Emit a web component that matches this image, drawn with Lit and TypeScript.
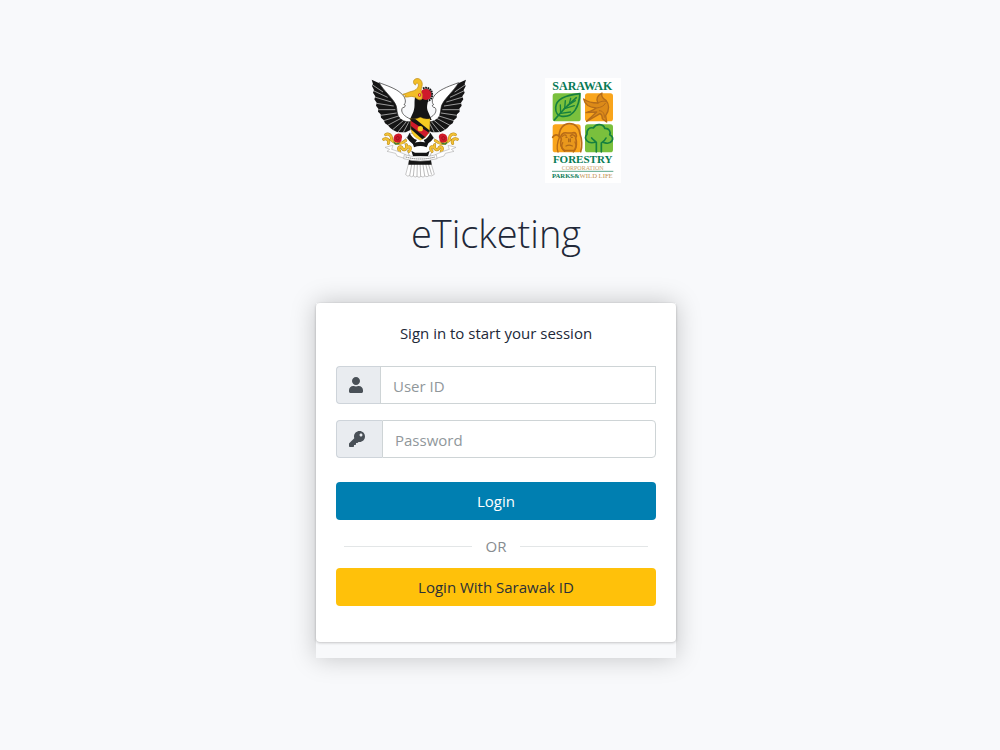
import { LitElement, html, svg, css } from "lit";
import { customElement } from "lit/decorators.js";

// One wing, drawn for the left side and mirrored for the right.
const wing = svg`
  <path fill="#151515" d="M20 29 L48 42 C70 55 92 62 104 74 L112 140 L140 152 L136 180 L122 187 L108 187 L96 186 L84 180 L76 174 L68 165 L60 160 L56 150 L48 143 L47 133 L39 125 L40 116 L33 107 L35 98 L28 88 L31 79 L24 68 L27 60 L21 48 L24 42 Z"/>
  <path fill="#fff" stroke="#222" stroke-width="2" d="M42 38 C64 46 94 56 108 70 C121 80 125 97 117 104 C123 103 122 113 113 113 C108 118 110 129 118 136 C126 143 134 146 142 149 L136 155 C118 157 104 148 99 136 C94 122 97 110 90 100 C82 84 58 64 42 38 Z"/>
  <g fill="none" stroke="#ddd" stroke-width="2">
    <path d="M23 45 L54 66"/><path d="M25 62 L68 82"/><path d="M29 81 L79 96"/>
    <path d="M34 100 L86 108"/><path d="M40 119 L91 119"/><path d="M47 136 L95 129"/>
    <path d="M56 152 L101 138"/><path d="M68 166 L108 145"/><path d="M83 179 L116 151"/>
    <path d="M99 186 L124 155"/><path d="M115 187 L131 157"/>
  </g>`;

const scroll = svg`
  <g fill="none" stroke="#b98a18" stroke-width="9" stroke-linecap="round">
    <path d="M62 194 C70 188 78 196 80 204 M56 208 C66 202 74 212 70 220 M78 208 C92 224 104 226 122 212 M104 244 C96 232 108 224 112 236 C118 244 128 236 124 224 M128 232 C138 226 138 240 132 244"/>
  </g>
  <g fill="none" stroke="#f2c136" stroke-width="6" stroke-linecap="round">
    <path d="M62 194 C70 188 78 196 80 204 M56 208 C66 202 74 212 70 220 M78 208 C92 224 104 226 122 212 M104 244 C96 232 108 224 112 236 C118 244 128 236 124 224 M128 232 C138 226 138 240 132 244"/>
  </g>
  <path fill="#3f7a34" d="M84 214 l10 6 12-3 -4 6 -12 1z"/>
  <path fill="#cf1a2b" d="M98 191 C109 189 114 199 110 206 C111 215 102 220 95 217 C86 216 84 206 87 200 C89 193 94 191 98 191 Z"/>
  <path fill="none" stroke="#8e0b18" stroke-width="2" d="M94 202 C98 196 106 202 101 208 C96 212 91 207 94 202"/>
  <path fill="#fff" stroke="#b4b4b4" stroke-width="2" d="M60 232 L84 226 L80 238 L104 246 L122 254 L122 266 L96 258 L92 250 L66 244 L74 238 Z"/>`;

const crest = svg`
  <svg class="crest" viewBox="18 24 288 300" role="img" aria-label="Sarawak coat of arms">
    <path fill="#fff" stroke="#aaa" stroke-width="2" d="M133 272 L122 314 Q128 321 134 317 Q139 323 145 318 Q150 324 156 319 Q162 325 168 319 Q174 324 180 318 Q186 323 192 317 Q200 320 208 313 L196 272 Z"/>
    <path fill="none" stroke="#999" stroke-width="2" d="M141 278 L134 317 M149 278 L145 318 M157 278 L156 319 M165 278 L167 319 M173 278 L179 318 M181 278 L191 317 M189 278 L200 314"/>
    ${wing}
    <g transform="matrix(-1 0 0 1 323 0)">${wing}</g>
    <path fill="#fff" stroke="#999" stroke-width="2" d="M136 190 L196 190 L214 214 L190 270 L138 270 L116 212 Z"/>
    <path fill="#151515" d="M134 188 Q140 204 156 210 L146 224 L134 214 L126 204 Z M196 188 Q190 204 176 210 L184 224 L198 214 L206 204 Z"/>
    <path fill="#151515" d="M143 220 Q166 210 190 220 L185 232 Q166 224 147 232 Z M139 242 L150 248 L184 248 L194 242 L189 258 L144 258 Z M132 270 L198 270 L200 284 L130 284 Z"/>
    ${scroll}
    <g transform="matrix(-1 0 0 1 333 0)">${scroll}</g>
    <path fill="#fff" stroke="#aaa" stroke-width="2" d="M118 254 Q166 268 214 254 L216 266 Q166 280 116 266 Z"/>
    <path fill="none" stroke="#777" stroke-width="3" stroke-dasharray="4 2" d="M122 261 Q166 273 210 261"/>
    <path fill="#151515" d="M151 78 C146 96 152 108 145 126 L134 150 L200 150 L188 122 C183 108 190 98 190 84 Z"/>
    <circle cx="183" cy="73" r="17" fill="#cf1a2b"/>
    <path fill="none" stroke="#151515" stroke-width="6" stroke-dasharray="5 2" d="M174 56 C184 49 200 57 201 70 C203 82 197 92 186 93"/>
    <path fill="#f2bd27" stroke="#b98a18" stroke-width="2" d="M113 73 C124 71 130 66 140 64 C150 62 158 57 160 48 C162 38 152 37 152 45 C145 43 142 32 151 27 C164 21 175 35 171 48 C168 58 167 66 172 73 L171 87 C162 94 155 84 148 81 C137 76 132 83 119 81 L122 76 Z"/>
    <circle cx="164" cy="75" r="5" fill="#cf1a2b"/><circle cx="164" cy="75" r="2" fill="#fff"/>
    <path fill="#f6cb22" d="M137 146 Q151 150 166 142 Q180 150 195 146 L194 180 Q190 200 166 211 Q142 200 138 180 Z"/>
    <path fill="#151515" d="M137 146 L151 147 L195 182 L192 190 L137 156 Z"/>
    <path fill="#cf1a2b" d="M137 152 L192 188 L180 203 L137 169 Z"/>
    <path fill="#151515" d="M137 167 L181 202 L172 208 L138 178 Z"/>
    <circle cx="166" cy="176" r="8" fill="#f6cb22"/>
    <path fill="none" stroke="#a87a10" stroke-width="1" d="M137 146 Q151 150 166 142 Q180 150 195 146 L194 180 Q190 200 166 211 Q142 200 138 180 Z"/>
  </svg>`;

const forestry = svg`
  <svg class="forestry" viewBox="31 24 228 315" role="img" aria-label="Sarawak Forestry Corporation">
    <rect x="31" y="24" width="228" height="315" fill="#fff"/>
    <text x="143" y="59" class="name" font-size="36" fill="#087a55">SARAWAK</text>
    <rect x="54" y="70" width="84" height="84" rx="8" fill="#7ac03d"/>
    <rect x="151" y="70" width="84" height="84" rx="8" fill="#f9a51c"/>
    <rect x="54" y="163" width="84" height="84" rx="8" fill="#f9a51c"/>
    <rect x="151" y="163" width="84" height="84" rx="8" fill="#7ac03d"/>
    <g fill="none" stroke="#16803f" stroke-width="5" stroke-linecap="round" stroke-linejoin="round">
      <path d="M136 71 C105 74 65 84 63 112 C62 128 70 138 82 139 C118 143 133 108 136 71 Z"/>
      <path d="M59 150 C72 134 95 108 125 83"/>
      <path d="M78 130 L108 126 M89 116 L119 107 M99 106 L122 92 M78 130 L77 105 M90 116 L92 92 M104 102 L108 85" stroke-width="4"/>
      <path d="M184 216 C158 224 146 206 157 193 C155 178 166 171 176 174 C185 158 207 163 210 175 C224 174 229 186 225 194 C242 204 232 225 209 218 L203 216 M184 216 C180 212 174 208 171 204 M185 217 L185 246 M200 246 L200 219 C204 217 210 213 214 204"/>
    </g>
    <g fill="#dc8a18" stroke="#b46c1a" stroke-width="4" stroke-linecap="round" stroke-linejoin="round">
      <path d="M147 87 C160 97 176 99 190 99 C182 88 189 76 202 69 C198 80 205 86 214 91 C224 102 225 120 213 137 L216 156 L203 146 C203 138 202 134 196 131 L156 154 L186 126 L154 128 C168 124 178 120 184 114 C166 112 150 104 147 87 Z"/>
      <path fill="none" stroke-width="3" d="M190 99 C198 94 206 92 214 94 M186 114 C200 112 208 108 212 100 M194 122 C204 122 210 130 209 142"/>
    </g>
    <g fill="none" stroke="#b86b17" stroke-width="5" stroke-linecap="round" stroke-linejoin="round">
      <path d="M54 202 C60 193 68 192 73 200 C74 175 87 161 104 161 C124 161 134 176 136 192 C142 206 143 230 138 245"/>
      <path fill="#e9981c" d="M78 200 C82 188 90 187 98 189 L112 189 C123 185 128 193 123 204 C128 220 126 231 118 242 L90 242 C78 232 76 218 80 208 Z"/>
      <path d="M75 200 C68 216 65 232 70 246 M84 218 C78 230 82 239 90 244 M121 216 C127 228 124 240 116 246 M83 199 C88 193 93 194 95 198 M107 198 C112 192 118 194 121 199" stroke-width="4"/>
      <path d="M94 202 L97 202 M110 202 L113 202 M102 207 L102 215 M107 207 L107 215 M94 228 Q103 223 113 228" stroke="#b06a18" stroke-width="4"/>
    </g>
    <text x="144" y="280" class="name" font-size="33" fill="#087a55">FORESTRY</text>
    <text x="144" y="299" class="sub" font-size="18" fill="#c9a36b">CORPORATION</text>
    <path d="M52 304 H236" stroke="#087a55" stroke-width="2"/>
    <text x="143" y="323" class="sub" font-size="20" fill="#c09050"><tspan font-weight="700" fill="#087a55">PARKS&amp;</tspan>WILD LIFE</text>
  </svg>`;

@customElement("app-root")
export class AppRoot extends LitElement {
  static styles = css`
    :host {
      display: block;
      min-height: 100vh;
      box-sizing: border-box;
      background: #f8f9fb;
      color: #212838;
      font-family: "Segoe UI", "Open Sans", "Noto Sans", sans-serif;
      font-size: 15px;
      line-height: 24px;
    }
    *, *::before, *::after { box-sizing: border-box; }
    .page {
      display: flex;
      flex-direction: column;
      align-items: center;
      padding: 78px 8px 40px 0;
    }
    .logos { display: flex; align-items: flex-start; gap: 78px; }
    .crest { display: block; width: 96px; height: 100px; }
    .forestry { display: block; width: 76px; height: 105px; }
    .name, .sub { font-family: "Liberation Serif", serif; text-anchor: middle; }
    .name { font-weight: 700; }
    h1 {
      margin: 26px 0 46px;
      font-size: 38px;
      font-weight: 300;
      line-height: 48px;
    }
    .box {
      width: 360px;
      max-width: 100%;
      padding-bottom: 16px;
      box-shadow: 0 0 24px rgba(0, 0, 0, 0.22);
    }
    .card {
      padding: 18px 20px 36px;
      background: #fff;
      border-radius: 4px;
      box-shadow: 0 0 1px rgba(0, 0, 0, 0.13), 0 1px 3px rgba(0, 0, 0, 0.2);
    }
    .intro { margin: 0 0 21px; text-align: center; }
    .field { display: flex; height: 38px; margin-bottom: 16px; }
    .addon {
      display: flex;
      align-items: center;
      padding: 0 17px 0 12px;
      border: 1px solid #ced4da;
      border-right: 0;
      border-radius: 4px 0 0 4px;
      background: #e9ecf0;
      color: #495057;
    }
    .addon svg { display: block; height: 16px; fill: currentColor; }
    .user { width: 14px; }
    .key { width: 16px; }
    input {
      flex: 1;
      min-width: 0;
      padding: 2px 12px 0;
      border: 1px solid #ced4d6;
      border-radius: 0;
      background: #fff;
      color: #495057;
      font: inherit;
    }
    .round { border-radius: 0 4px 4px 0; }
    input::placeholder { color: #90979b; opacity: 1; }
    button {
      display: block;
      width: 100%;
      height: 38px;
      padding: 0 12px;
      border: 0;
      border-radius: 4px;
      font: inherit;
      cursor: pointer;
    }
    .primary { margin-top: 24px; background: #007fb1; color: #fff; }
    .warning { background: #ffc10a; color: #2b3038; }
    .or {
      display: flex;
      align-items: center;
      gap: 14px;
      margin: 14px 8px 10px;
      color: #878c90;
    }
    .or::before, .or::after { content: ""; flex: 1; height: 1px; background: #e3e6e7; }
  `;

  render() {
    return html`
      <main class="page">
        <div class="logos">${crest}${forestry}</div>
        <h1>eTicketing</h1>
        <div class="box">
          <form class="card" @submit=${(e: Event) => e.preventDefault()}>
            <p class="intro">Sign in to start your session</p>
            <div class="field">
              <label class="addon" for="user" aria-label="User ID">
                <svg class="user" viewBox="0 0 448 512" aria-hidden="true"><path d="M224 256c70.700 0 128-57.300 128-128S294.700 0 224 0 96 57.300 96 128s57.300 128 128 128zm89.600 32h-16.700c-22.200 10.200-46.900 16-72.900 16s-50.600-5.800-72.900-16h-16.700C60.200 288 0 348.200 0 422.400V464c0 26.500 21.500 48 48 48h352c26.500 0 48-21.500 48-48v-41.600c0-74.200-60.200-134.400-134.400-134.400z"/></svg>
              </label>
              <input id="user" type="text" placeholder="User ID" autocomplete="username">
            </div>
            <div class="field">
              <label class="addon" for="password" aria-label="Password">
                <svg class="key" viewBox="0 0 512 512" aria-hidden="true"><path d="M512 176c0 97.200-78.800 176-176 176-11.200 0-22.200-1.100-32.800-3.100l-24 27A24 24 0 0 1 261.200 384H224v40c0 13.300-10.700 24-24 24h-40v40c0 13.300-10.700 24-24 24H24c-13.300 0-24-10.700-24-24v-78.100c0-6.400 2.500-12.500 7-17l161.800-161.800A175.900 175.900 0 0 1 160 176C160 78.800 238.800 0 336 0c97.500 0 176 78.500 176 176zM336 128c0 26.500 21.500 48 48 48s48-21.500 48-48-21.500-48-48-48-48 21.500-48 48z"/></svg>
              </label>
              <input id="password" class="round" type="password" placeholder="Password" autocomplete="current-password">
            </div>
            <button class="primary" type="submit">Login</button>
            <div class="or">OR</div>
            <button class="warning" type="button">Login With Sarawak ID</button>
          </form>
        </div>
      </main>
    `;
  }
}
